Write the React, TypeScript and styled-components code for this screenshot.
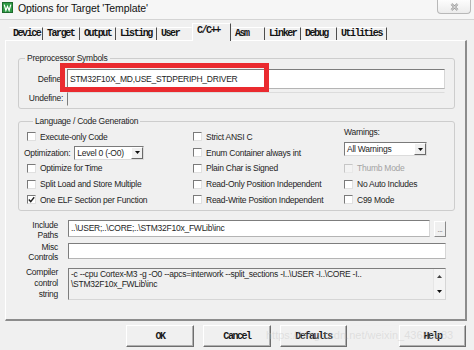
import React from "react";
import styled, { createGlobalStyle } from "styled-components";

const UI = `"Liberation Sans", Arial, Helvetica, sans-serif`;
const MONO = `"Liberation Mono", "Courier New", monospace`;

const GlobalStyle = createGlobalStyle`
  html, body { margin: 0; padding: 0; background: #f0f0f0; }
  *, *::before, *::after { box-sizing: border-box; }
`;

const Window = styled.div`
  position: relative;
  width: 474px;
  height: 350px;
  overflow: hidden;
  display: flex;
  flex-direction: column;
  background: #f0f0f0;
  font-family: ${UI};
  font-size: 8.5px;
  letter-spacing: -0.25px;
  color: #1e1e1e;
`;

const TitleBar = styled.div`
  flex: none;
  height: 20px;
  display: flex;
  align-items: flex-start;
  padding: 2px 3px 0 2px;
  background: #f6f6f6;
  border-bottom: 1px solid #d4d4d4;
`;

const Title = styled.span`
  margin-left: 5px;
  font-size: 10.5px;
  line-height: 12px;
  letter-spacing: -0.1px;
  color: #111;
`;

const CloseButton = styled.div`
  margin-left: auto;
  margin-top: -2px;
  width: 34px;
  height: 14px;
  display: flex;
  align-items: center;
  justify-content: center;
  border: 1px solid #b8b8b8;
  border-top: none;
  border-radius: 0 0 4px 4px;
  background: linear-gradient(#fdfdfd, #ececec);
`;

const Body = styled.div`
  flex: 1;
  display: flex;
  flex-direction: column;
  padding: 0 7px 0 5px;
`;

const TabStrip = styled.div`
  height: 20px;
  display: flex;
  align-items: flex-end;
  padding-left: 4px;
`;

const Tab = styled.div<{ $w: number; $active?: boolean; $hideSep?: boolean }>`
  position: relative;
  z-index: ${(p) => (p.$active ? 2 : 1)};
  width: ${(p) => p.$w}px;
  height: ${(p) => (p.$active ? 18 : 13)}px;
  margin-bottom: ${(p) => (p.$active ? -1 : 0)}px;
  padding: ${(p) => (p.$active ? "2px 0 0 4px" : "1px 0 0 3px")};
  background: #f0f0f0;
  border-top: 1px solid #fff;
  border-left: 1px solid ${(p) => (p.$active ? "#fff" : "transparent")};
  border-right: 1px solid ${(p) => (p.$hideSep ? "transparent" : "#4d4d4d")};
  font-family: ${MONO};
  font-weight: bold;
  font-size: 10px;
  letter-spacing: -1.45px;
  line-height: 10px;
  color: #141414;
  white-space: pre;
`;

const Panel = styled.div`
  height: 281px;
  display: flex;
  flex-direction: column;
  padding: 12px 10px 0 12px;
  border-top: 1px solid #fff;
  border-left: 1px solid #fff;
  border-right: 2px solid #8c8c8c;
  border-bottom: 2px solid #8c8c8c;
`;

const Group = styled.fieldset<{ $mt?: number; $pad: string }>`
  margin: ${(p) => p.$mt ?? 0}px 0 0 0;
  min-width: 0;
  padding: ${(p) => p.$pad};
  border: 1px solid #cdcdcd;
  border-radius: 3px;
`;

const Legend = styled.legend`
  margin-left: 6px;
  padding: 0 2px;
  line-height: 10px;
  color: #1e1e1e;
`;

const SymbolGrid = styled.div`
  display: grid;
  grid-template-columns: 44px 1fr;
  grid-template-rows: 20px 14px;
  column-gap: 4px;
  row-gap: 3px;
`;

const FieldLabel = styled.label<{ $lh?: number }>`
  text-align: right;
  line-height: ${(p) => p.$lh ?? 10}px;
  white-space: pre-line;
`;

const Edit = styled.div<{ $h: number; $mt?: number; $disabled?: boolean }>`
  height: ${(p) => p.$h}px;
  margin-top: ${(p) => p.$mt ?? 0}px;
  padding: 0 2px;
  line-height: ${(p) => p.$h - 2}px;
  background: ${(p) => (p.$disabled ? "#f0f0f0" : "#fff")};
  border: 1px solid;
  border-color: ${(p) =>
    p.$disabled
      ? "#dcdcdc #f0f0f0 #f0f0f0 #7d7d7d"
      : "#7d7d7d #d6d6d6 #b4b4b4 #7d7d7d"};
  white-space: pre;
  overflow: hidden;
  min-width: 0;
`;

const LangGrid = styled.div`
  display: grid;
  grid-template-columns: 166px 151px 1fr;
`;

const Col = styled.div`
  display: flex;
  flex-direction: column;
`;

const OptRow = styled.div<{ $indent?: number }>`
  height: 15.75px;
  display: flex;
  align-items: center;
  gap: 4px;
  margin-left: ${(p) => p.$indent ?? 0}px;
  white-space: nowrap;
`;

const Box = styled.span<{ $disabled?: boolean }>`
  flex: none;
  width: 9px;
  height: 9px;
  display: flex;
  align-items: center;
  justify-content: center;
  background: ${(p) => (p.$disabled ? "#f3f3f3" : "#fff")};
  border: 1px solid;
  border-color: ${(p) =>
    p.$disabled ? "#c6c6c6 #e8e8e8 #e8e8e8 #c6c6c6" : "#7a7a7a #e0e0e0 #e0e0e0 #7a7a7a"};
`;

const OptText = styled.span<{ $disabled?: boolean }>`
  line-height: 10px;
  color: ${(p) => (p.$disabled ? "#a3a3a3" : "inherit")};
`;

const Combo = styled.div<{ $w: number }>`
  flex: none;
  width: ${(p) => p.$w}px;
  height: 14px;
  display: flex;
  background: #fff;
  border: 1px solid;
  border-color: #7a7a7a #dcdcdc #dcdcdc #7a7a7a;
`;

const ComboText = styled.span`
  flex: 1;
  padding-left: 2px;
  line-height: 12px;
  white-space: nowrap;
`;

const ComboButton = styled.span`
  width: 12px;
  height: 12px;
  display: flex;
  align-items: center;
  justify-content: center;
  background: #f0f0f0;
  border: 1px solid;
  border-color: #fff #6a6a6a #6a6a6a #fff;
`;

const WarnBlock = styled.div`
  height: 31.5px;
  display: flex;
  flex-direction: column;
  gap: 5px;
`;

const WarnLabel = styled.span`
  margin-top: -2px;
  line-height: 10px;
`;

const FieldGrid = styled.div`
  margin-top: 9px;
  margin-right: 9px;
  display: grid;
  grid-template-columns: 40px 1fr;
  grid-template-rows: 22px 25px 33px;
  column-gap: 10px;
`;

const IncludeControl = styled.div`
  display: flex;
  gap: 4px;
  align-items: flex-start;
`;

const IncludeEdit = styled(Edit)`
  flex: 1;
`;

const Browse = styled.div`
  flex: none;
  width: 12px;
  height: 16px;
  margin-top: 1px;
  display: flex;
  align-items: flex-end;
  justify-content: center;
  padding-bottom: 3px;
  font-size: 7px;
  line-height: 7px;
  color: #555;
  background: #f0f0f0;
  border: 1px solid;
  border-color: #fff #8a8a8a #8a8a8a #fff;
`;

const Memo = styled.div`
  height: 32px;
  margin-top: 1px;
  display: flex;
  background: #f0f0f0;
  border: 1px solid;
  border-color: #7d7d7d #d6d6d6 #d6d6d6 #7d7d7d;
`;

const MemoText = styled.div`
  flex: 1;
  padding: 0 2px;
  line-height: 10.5px;
  white-space: pre;
  overflow: hidden;
`;

const ScrollBar = styled.div`
  width: 12px;
  display: flex;
  flex-direction: column;
  background: #f4f4f4;
  border-left: 1px solid #e6e6e6;
`;

const ScrollArrow = styled.div`
  flex: 1;
  display: flex;
  align-items: center;
  justify-content: center;
`;

const ButtonRow = styled.div`
  margin-top: 4px;
  display: flex;
  justify-content: flex-end;
  gap: 9px;
  padding-right: 1px;
`;

const DlgButton = styled.button<{ $w: number; $before?: number }>`
  width: ${(p) => p.$w}px;
  height: 22px;
  margin: 0 0 0 ${(p) => p.$before ?? 0}px;
  padding: 0;
  background: #f0f0f0;
  border: 1px solid;
  border-color: #fff #6e6e6e #6e6e6e #fff;
  box-shadow: inset -1px -1px 0 #b0b0b0;
  font-family: ${MONO};
  font-weight: bold;
  font-size: 10px;
  letter-spacing: -1.45px;
  color: #1a1a1a;
`;

const Highlight = styled.div`
  position: absolute;
  left: 60px;
  top: 63px;
  width: 209px;
  height: 29px;
  border: 5px solid #ea2a2f;
  pointer-events: none;
`;

const Watermark = styled.div`
  position: absolute;
  left: 266px;
  top: 329px;
  font-family: ${UI};
  font-size: 11px;
  letter-spacing: 0;
  color: rgba(200, 200, 200, 0.45);
  white-space: nowrap;
  pointer-events: none;
`;

const tabs: { label: string; w: number; active?: boolean }[] = [
  { label: "Device", w: 34 },
  { label: "Target", w: 37 },
  { label: "Output", w: 36 },
  { label: "Listing", w: 41 },
  { label: "User", w: 35 },
  { label: "C/C++", w: 39, active: true },
  { label: "Asm", w: 34 },
  { label: "Linker", w: 36 },
  { label: "Debug", w: 36 },
  { label: "Utilities", w: 50 },
];

const AppIcon = () => (
  <svg width="11" height="11" viewBox="0 0 11 11">
    <rect x="0.5" y="0.5" width="10" height="10" fill="#2f9a45" stroke="#1d6a2c" />
    <path d="M2.2 2.6 L3.9 8.4 L5.5 4.4 L7.1 8.4 L8.8 2.6" fill="none" stroke="#fff" strokeWidth="1.2" />
  </svg>
);

const CloseGlyph = () => (
  <svg width="9" height="8" viewBox="0 0 9 8">
    <path d="M1.5 1 L7.5 7 M7.5 1 L1.5 7" stroke="#8d8d8d" strokeWidth="2.4" />
    <path d="M1.5 1 L7.5 7 M7.5 1 L1.5 7" stroke="#fafafa" strokeWidth="0.9" />
  </svg>
);

const DownTri = () => (
  <svg width="5" height="3" viewBox="0 0 5 3">
    <path d="M0 0 H5 L2.5 3 Z" fill="#111" />
  </svg>
);

const UpTri = () => (
  <svg width="5" height="3" viewBox="0 0 5 3">
    <path d="M0 3 H5 L2.5 0 Z" fill="#444" />
  </svg>
);

const Tick = () => (
  <svg width="7" height="7" viewBox="0 0 7 7">
    <path d="M0.8 3.6 L2.7 5.6 L6.2 1.2" fill="none" stroke="#222" strokeWidth="1.4" />
  </svg>
);

const Option = ({
  label,
  checked,
  disabled,
}: {
  label: string;
  checked?: boolean;
  disabled?: boolean;
}) => (
  <OptRow>
    <Box $disabled={disabled}>{checked && <Tick />}</Box>
    <OptText $disabled={disabled}>{label}</OptText>
  </OptRow>
);

const Select = ({ w, value }: { w: number; value: string }) => (
  <Combo $w={w}>
    <ComboText>{value}</ComboText>
    <ComboButton>
      <DownTri />
    </ComboButton>
  </Combo>
);

export default function App() {
  const activeIndex = tabs.findIndex((t) => t.active);
  return (
    <>
      <GlobalStyle />
      <Window>
        <TitleBar>
          <AppIcon />
          <Title>Options for Target 'Template'</Title>
          <CloseButton>
            <CloseGlyph />
          </CloseButton>
        </TitleBar>
        <Body>
          <TabStrip>
            {tabs.map((t, i) => (
              <Tab key={t.label} $w={t.w} $active={t.active} $hideSep={i === activeIndex - 1}>
                {t.label}
              </Tab>
            ))}
          </TabStrip>
          <Panel>
            <Group $pad="6px 9px 2px 0">
              <Legend>Preprocessor Symbols</Legend>
              <SymbolGrid>
                <FieldLabel $lh={20}>Define:</FieldLabel>
                <Edit $h={20}>STM32F10X_MD,USE_STDPERIPH_DRIVER</Edit>
                <FieldLabel $lh={12}>Undefine:</FieldLabel>
                <Edit $h={14} $disabled />
              </SymbolGrid>
            </Group>
            <Group $mt={7} $pad="3px 0 2px 8px">
              <Legend>Language / Code Generation</Legend>
              <LangGrid>
                <Col>
                  <Option label="Execute-only Code" />
                  <OptRow $indent={-3}>
                    <OptText>Optimization:</OptText>
                    <Select w={70} value="Level 0 (-O0)" />
                  </OptRow>
                  <Option label="Optimize for Time" />
                  <Option label="Split Load and Store Multiple" />
                  <Option label="One ELF Section per Function" checked />
                </Col>
                <Col>
                  <Option label="Strict ANSI C" />
                  <Option label="Enum Container always int" />
                  <Option label="Plain Char is Signed" />
                  <Option label="Read-Only Position Independent" />
                  <Option label="Read-Write Position Independent" />
                </Col>
                <Col>
                  <WarnBlock>
                    <WarnLabel>Warnings:</WarnLabel>
                    <Select w={83} value="All Warnings" />
                  </WarnBlock>
                  <Option label="Thumb Mode" disabled />
                  <Option label="No Auto Includes" />
                  <Option label="C99 Mode" />
                </Col>
              </LangGrid>
            </Group>
            <FieldGrid>
              <FieldLabel>{"Include\nPaths"}</FieldLabel>
              <IncludeControl>
                <IncludeEdit $h={17}>..\USER;..\CORE;..\STM32F10x_FWLib\inc</IncludeEdit>
                <Browse>...</Browse>
              </IncludeControl>
              <FieldLabel>{"Misc\nControls"}</FieldLabel>
              <Edit $h={16} $mt={1} />
              <FieldLabel $lh={11}>{"Compiler\ncontrol\nstring"}</FieldLabel>
              <Memo>
                <MemoText>
                  {"-c --cpu Cortex-M3 -g -O0 --apcs=interwork --split_sections -I..\\USER -I..\\CORE -I..\n\\STM32F10x_FWLib\\inc"}
                </MemoText>
                <ScrollBar>
                  <ScrollArrow>
                    <UpTri />
                  </ScrollArrow>
                  <ScrollArrow>
                    <DownTri />
                  </ScrollArrow>
                </ScrollBar>
              </Memo>
            </FieldGrid>
          </Panel>
          <ButtonRow>
            <DlgButton $w={68}>OK</DlgButton>
            <DlgButton $w={68}>Cancel</DlgButton>
            <DlgButton $w={67}>Defaults</DlgButton>
            <DlgButton $w={67} $before={43}>
              Help
            </DlgButton>
          </ButtonRow>
        </Body>
        <Highlight />
        <Watermark>https://blog.csdn.net/weixin_43688883</Watermark>
      </Window>
    </>
  );
}
